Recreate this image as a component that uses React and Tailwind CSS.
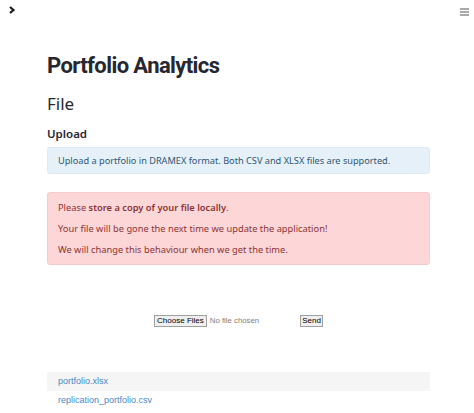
import React from "react";

export default function App() {
  const sans = { fontFamily: '"Noto Sans", "Open Sans", sans-serif' };
  return (
    <div className="w-[474px] h-[413px] bg-white overflow-hidden relative" style={sans}>
      <div className="absolute left-[8px] top-[5px] text-[#262730]">
        <svg width="8" height="10" viewBox="0 0 8 10">
          <path d="M2 2 L5.5 5 L2 8" stroke="#1a1a1a" strokeWidth="2.2" fill="none" />
        </svg>
      </div>
      <div className="absolute left-[460px] top-[8px]">
        <svg width="9" height="8" viewBox="0 0 9 8">
          <path d="M0 1 H9 M0 4 H9 M0 7 H9" stroke="#555" strokeWidth="1" />
        </svg>
      </div>
      <div className="pl-[47px] pr-[44px] pt-[51px] flex flex-col">
        <h1 className="text-[22px] font-bold text-[#262730] leading-[30px] tracking-[-0.6px]" style={{ fontFamily: 'Roboto, "Noto Sans", sans-serif' }}>Portfolio Analytics</h1>
        <h2 className="mt-[11px] text-[17px] text-[#262730] leading-[24px]">File</h2>
        <h3 className="mt-[10px] text-[11.5px] font-semibold text-[#262730] leading-[16px]">Upload</h3>
        <div className="mt-[5px] h-[27px] rounded-[3px] bg-[#e6f0f8] border border-[#dde9f3] flex items-center px-[10px] text-[9.2px] text-[#2c5877]">
          Upload a portfolio in DRAMEX format. Both CSV and XLSX files are supported.
        </div>
        <div className="mt-[18px] h-[73px] rounded-[3px] bg-[#fdd6d7] border border-[#f7cbcc] flex flex-col justify-center gap-[8px] px-[10px] text-[9.3px] text-[#8b3436] leading-[13px]">
          <p>Please <span className="font-semibold">store a copy of your file locally</span>.</p>
          <p>Your file will be gone the next time we update the application!</p>
          <p>We will change this behaviour when we get the time.</p>
        </div>
        <div className="mt-[50px] flex items-center justify-center" style={{ fontFamily: '"Liberation Sans", Arial, sans-serif' }}>
          <div className="flex items-center">
            <span className="border border-[#a0a0a0] bg-[#efefef] px-[2px] h-[12px] leading-[10px] text-[8px] text-black">Choose Files</span>
            <span className="ml-[3px] text-[7.8px] text-[#808080]">No file chosen</span>
            <span className="ml-[41px] border border-[#a0a0a0] bg-[#efefef] px-[1px] h-[12px] leading-[10px] text-[8px] text-black">Send</span>
          </div>
        </div>
        <div className="mt-[45px] flex flex-col text-[9px] text-[#4a87c4]" style={{ fontFamily: '"Liberation Sans", Arial, sans-serif' }}>
          <div className="h-[19px] bg-[#f5f5f5] flex items-center px-[11px]">portfolio.xlsx</div>
          <div className="h-[19px] flex items-center px-[11px]">replication_portfolio.csv</div>
        </div>
      </div>
    </div>
  );
}
